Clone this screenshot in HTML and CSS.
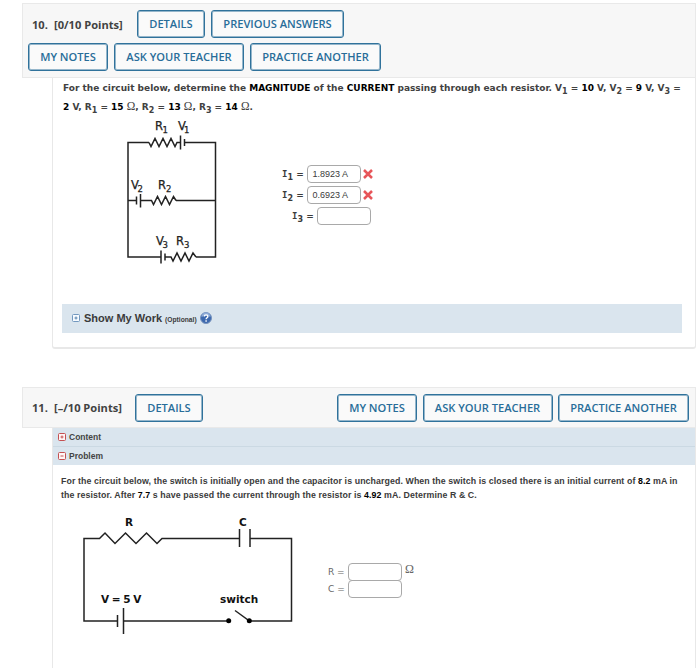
FILE: index.html
```html
<!DOCTYPE html>
<html lang="en">
<head>
<meta charset="utf-8">
<title>Circuit Problems</title>
<link rel="stylesheet" href="styles.css">
</head>
<body>
<section class="question q10">
  <header class="head head-wrap">
    <div class="row">
      <h2 class="title"><span class="num">10.</span><span class="pts">[0/10 Points]</span></h2>
      <button class="btn details">DETAILS</button>
      <button class="btn previous">PREVIOUS ANSWERS</button>
    </div>
    <div class="row">
      <button class="btn notes">MY NOTES</button>
      <button class="btn teacher">ASK YOUR TEACHER</button>
      <button class="btn another">PRACTICE ANOTHER</button>
    </div>
  </header>
  <div class="body">
    <p class="prompt verdana"><span class="l1">For the circuit below, determine the <b>MAGNITUDE</b> of the <b>CURRENT</b> passing through each resistor. V<sub>1</sub> = <b>10</b> V, V<sub>2</sub> = <b>9</b> V, V<sub>3</sub> =</span><br><span class="l2"><b>2</b> V, R<sub>1</sub> = <b>15</b> <i>Ω</i>, R<sub>2</sub> = <b>13</b> <i>Ω</i>, R<sub>3</sub> = <b>14</b> <i>Ω</i>.</span></p>
    <div class="work">
      <svg class="circuit1" width="130" height="160" viewBox="110 110 130 160">
        <g class="wire">
          <path d="M149 142.500H128V257H161M128 200.500H136.500M184.500 142.500H215.500V257H196M215.500 200.500H176"/>
          <path d="M149 142.500l2 4 4-8 4 8 4-8 4 8 4-8 4 8 2-4H180.500M180.500 135.500v14M184.500 139v7"/>
          <path d="M136.500 196.500v8M140.500 194v13.500M140.500 200.500h11l2 4 4-8 4 8 4-8 4 8 4-8 2.500 4"/>
          <path d="M161 250.500v13M165 253.500v7M165 257h6l2 4 4-8 4 8 4-8 4 8 4-8 3 4"/>
        </g>
        <g class="label1">
          <text x="155" y="129.500">R<tspan class="s" dy="3" dx="-.5">1</tspan></text>
          <text x="178" y="129.500">V<tspan class="s" dy="3" dx="-2">1</tspan></text>
          <text x="131" y="189">V<tspan class="s" dy="3" dx="-1.500">2</tspan></text>
          <text x="158" y="189">R<tspan class="s" dy="3">2</tspan></text>
          <text x="156" y="244.500">V<tspan class="s" dy="3" dx="-1.500">3</tspan></text>
          <text x="176" y="244.500">R<tspan class="s" dy="3">3</tspan></text>
        </g>
      </svg>
      <div class="answers">
        <div class="answer"><label><span class="cur">I</span><sub>1</sub> =</label><span class="field">1.8923 A</span><svg class="wrong" width="10" height="10" viewBox="0 0 10 10"><path d="M1 1L9 9M9 1L1 9"/></svg></div>
        <div class="answer"><label><span class="cur">I</span><sub>2</sub> =</label><span class="field">0.6923 A</span><svg class="wrong" width="10" height="10" viewBox="0 0 10 10"><path d="M1 1L9 9M9 1L1 9"/></svg></div>
        <div class="answer last"><label><span class="cur">I</span><sub>3</sub> =</label><span class="field"></span></div>
      </div>
    </div>
    <div class="show">
      <svg width="8" height="8" viewBox="0 0 8 8"><rect x=".5" y=".5" width="7" height="7" rx="1" fill="#f7fbff" stroke="#7298bf"/><path d="M2.500 4h3M4 2.500v3" stroke="#5683ae"/></svg>
      <strong>Show My Work</strong><small>(Optional)</small>
      <svg class="help" width="12" height="12" viewBox="0 0 12 12"><circle cx="6" cy="6" r="5.500" fill="#3c68ae" stroke="#7893bd"/><path d="M1.500 5a4.500 4.500 0 0 1 9 0Q6 2 1.500 5" fill="#8eabd7"/><path d="M4.300 4.400C4.300 2.300 7.900 2.300 7.900 4.400 7.900 5.800 6.100 5.700 6.100 7.200M6.100 8.300v1.400" fill="none" stroke="#fff" stroke-width="1.400"/></svg>
    </div>
  </div>
</section>
<section class="question q11">
  <header class="head head-line">
    <h2 class="title"><span class="num">11.</span><span class="pts">[–/10 Points]</span></h2>
    <button class="btn details">DETAILS</button>
    <span class="spacer"></span>
    <button class="btn notes">MY NOTES</button>
    <button class="btn teacher">ASK YOUR TEACHER</button>
    <button class="btn another">PRACTICE ANOTHER</button>
  </header>
  <div class="body">
    <div class="fold"><svg width="8" height="8" viewBox="0 0 8 8"><rect x=".5" y=".5" width="7" height="7" rx="1"/><path d="M2.500 4h3M4 2.500v3"/></svg>Content</div>
    <div class="fold second"><svg width="8" height="8" viewBox="0 0 8 8"><rect x=".5" y=".5" width="7" height="7" rx="1"/><path d="M2.500 4h3"/></svg>Problem</div>
    <p class="prompt arial"><span class="l1">For the circuit below, the switch is initially open and the capacitor is uncharged. When the switch is closed there is an initial current of <b>8.2</b> mA in</span><br><span class="l2">the resistor. After <b>7.7</b> s have passed the current through the resistor is <b>4.92</b> mA. Determine R &amp; C.</span></p>
    <div class="work">
      <svg class="circuit2" width="240" height="155" viewBox="70 505 240 155">
        <g class="wire">
          <path d="M117 621H84V538.500H99.500L105 533l10 10.500L125.500 533l10.500 10.500L146.500 533l10.500 10.500 5-5H239.500M239.500 529v18M250 529v18M250 538.500H291.500V621H249.500L235 610.500M123.500 621H228.500M117.500 615v12M123.500 608v26"/>
        </g>
        <circle cx="228.700" cy="620.700" r="2.500"/><circle cx="249.300" cy="620.700" r="2.500"/>
        <g class="label2">
          <text x="125" y="526">R</text><text x="239" y="526">C</text>
          <text class="volt" x="101" y="603">V = 5 V</text>
          <text x="220" y="603">switch</text>
        </g>
      </svg>
      <div class="answers">
        <div class="answer"><label>R =</label><span class="field"></span><span class="unit">Ω</span></div>
        <div class="answer"><label>C =</label><span class="field"></span></div>
      </div>
    </div>
  </div>
</section>
</body>
</html>
```
FILE: styles.css
```css
* { box-sizing: border-box; }
body { margin: 0; padding: 3px 4px 0 22px; width: 700px; height: 668px; overflow: hidden; background: #fff; color: #3b3b3b; }
.head { background: #f7f7f7; border: 1px solid #e9e9e9; }
.head-wrap { height: 75px; padding: 6px 0 0 5px; display: flex; flex-direction: column; gap: 5px; }
.row, .head-line { display: flex; align-items: center; gap: 6px; }
.head-line { height: 41px; padding: 0 6px 0 5px; gap: 5.500px; }
.title { display: flex; margin: 0; padding-left: 4px; width: 103px; font: 700 11.100px/27px "Open Sans", sans-serif; white-space: nowrap; color: #424242; }
.head-line .title { width: 101.500px; }
.num { width: 22px; }
.btn { height: 28px; padding: 0; border: 1px solid #30729b; border-radius: 3px; box-shadow: inset 0 0 0 1px rgba(48, 114, 155, .5); background: #fafafa; color: #286d99; font: 600 11.100px/24px "Open Sans", sans-serif; white-space: nowrap; }
.details { width: 68px; }
.previous { width: 133px; }
.notes { width: 80px; }
.teacher { width: 130px; }
.another { width: 131px; }
.spacer { flex: 1; }
.body { margin-left: 30px; border: solid #e8e8e8; border-width: 0 1px 0 1px; }
.q10 .body { height: 271px; border-width: 0 1px 2px 1px; border-radius: 0 0 3px 3px; }
.q11 { margin-top: 38px; }
.q11 .body { height: 260px; }
.prompt { margin: 0; white-space: nowrap; font-weight: 700; }
.prompt b { color: #000; }
.prompt i { font-style: normal; font-weight: 400; font-family: "Liberation Serif", serif; font-size: 11.500px; }
sub { font-size: 8px; line-height: 0; vertical-align: -2.500px; }
.verdana { padding: 2px 0 0 10px; height: 41px; font: 700 9px/17.500px "DejaVu Sans", sans-serif; color: #414141; }
.arial { padding: 9px 0 0 8px; height: 39px; font: 700 8.800px/14px "Liberation Sans", Arial, sans-serif; letter-spacing: .09px; }
.work { display: flex; }
.q10 .work { height: 185px; }
.circuit1 { margin: -9px 0 0 57px; }
.wire { fill: none; stroke: #222; stroke-width: 1.500; }
.label1 { font: 11.500px "DejaVu Sans", sans-serif; fill: #222; stroke: #222; stroke-width: .25px; }
.s { font-size: 8.500px; }
.label2 { font: 700 10.500px "DejaVu Sans", sans-serif; fill: #111; }
.volt { word-spacing: -1px; }
.q10 .answers { margin: 44px 0 0 42px; }
.answer { display: flex; align-items: center; height: 21.300px; }
.answer.last { padding-left: 10px; }
.answer label { width: 24.500px; font: 700 9px/18px "DejaVu Sans", sans-serif; white-space: nowrap; }
.cur { font-family: "DejaVu Sans Mono", monospace; }
.field { width: 54px; height: 18px; border: 1px solid #a9a9a9; border-radius: 4px; background: #fff; padding-left: 5px; font: 9px/16px "Liberation Sans", Arial, sans-serif; }
.wrong { margin-left: 2px; }
.wrong path { stroke: #e75559; stroke-width: 2.500; }
.show { margin: 0 13px 0 9px; height: 29px; background: #dae5ee; display: flex; align-items: center; padding: 0 0 2px 10px; font-family: "Liberation Sans", Arial, sans-serif; }
.show strong { margin-left: 4px; font-size: 11px; }
.show small { margin: 3px 0 0 3px; font-size: 6.700px; font-weight: 700; }
.help { margin-left: 3px; }
.fold { height: 19px; background: #dae5ee; border-bottom: 1px solid #cbd9e3; display: flex; align-items: center; gap: 3px; padding-left: 5px; font: 700 8.500px/18px "Liberation Sans", Arial, sans-serif; color: #444; }
.fold.second { height: 18px; border: 0; }
.fold rect { fill: #fff5f5; stroke: #c45052; }
.fold path { stroke: #c45052; }
.circuit2 { margin: 1px 0 0 17px; }
.q11 .answers { margin: 59px 0 0 18px; }
.q11 .answer { height: 17px; color: #666; }
.q11 .answer label { width: 20px; font-weight: 400; font-size: 9px; }
.unit { margin: -4px 0 0 3px; font: 12px "Liberation Serif", serif; }
```
